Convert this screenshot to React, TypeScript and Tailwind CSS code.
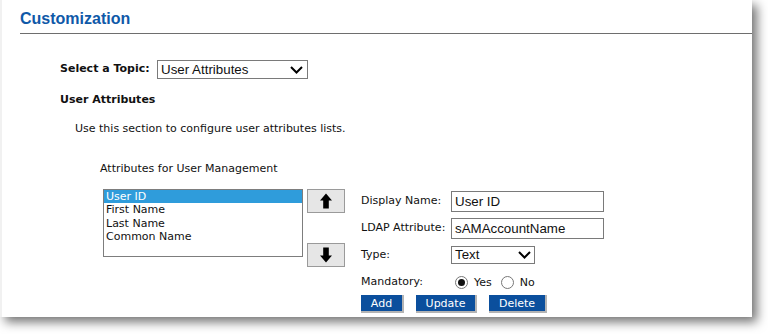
import React from "react";

const UpArrow = () => (
  <svg width="12" height="16" viewBox="0 0 12 16">
    <polygon points="6,0.5 12,7.5 8.8,7.5 8.8,15.5 3.2,15.5 3.2,7.5 0,7.5" fill="#000" />
  </svg>
);
const DownArrow = () => (
  <svg width="12" height="16" viewBox="0 0 12 16">
    <polygon points="6,15.5 12,8.5 8.8,8.5 8.8,0.5 3.2,0.5 3.2,8.5 0,8.5" fill="#000" />
  </svg>
);
const Chevron = () => (
  <svg width="13" height="8" viewBox="0 0 13 8">
    <polyline points="1,1 6.5,6.5 12,1" fill="none" stroke="#000" strokeWidth="2" />
  </svg>
);

export default function App() {
  return (
    <div className="w-[768px] h-[334px] bg-white font-['DejaVu_Sans',Verdana,sans-serif] text-[11px] text-[#111]">
      <div className="w-[752px] h-[317px] bg-white border-l-2 border-[#f1f1f1] shadow-[5px_5px_10px_rgba(0,0,0,0.55)] flex flex-col">
        <div className="ml-[18px] pt-[9px] pb-[4px] border-b border-[#6e6e6e]">
          <h1 className="font-['Liberation_Sans',Arial,sans-serif] font-bold text-[16px] leading-[20px] text-[#0f59a8]">
            Customization
          </h1>
        </div>

        <div className="flex items-center mt-[26px] ml-[58px] h-[19px]">
          <span className="font-bold w-[97px]">Select a Topic:</span>
          <div className="w-[151px] h-[19px] border border-[#7a7a7a] flex items-center justify-between pl-[3px] pr-[4px] font-['Liberation_Sans',Arial,sans-serif] text-[13.33px]">
            <span>User Attributes</span>
            <Chevron />
          </div>
        </div>

        <div className="ml-[58px] mt-[14px] font-bold leading-[14px]">User Attributes</div>
        <div className="ml-[73px] mt-[15px] leading-[14px]">Use this section to configure user attributes lists.</div>
        <div className="ml-[98px] mt-[26px] leading-[14px]">Attributes for User Management</div>

        <div className="flex ml-[101px] mt-[13px]">
          <div className="w-[200px] h-[68px] border border-[#7d7d7d] leading-[13.4px]">
            <div className="bg-[#2f9cdb] text-white pl-[2px]">User ID</div>
            <div className="pl-[2px]">First Name</div>
            <div className="pl-[2px]">Last Name</div>
            <div className="pl-[2px]">Common Name</div>
          </div>

          <div className="flex flex-col gap-[30px] ml-[4px]">
            <div className="w-[38px] h-[24px] bg-[#e6e6e6] border border-[#9a9a9a] flex items-center justify-center">
              <UpArrow />
            </div>
            <div className="w-[38px] h-[24px] bg-[#e6e6e6] border border-[#9a9a9a] flex items-center justify-center">
              <DownArrow />
            </div>
          </div>

          <div className="ml-[16px] mt-[2px] flex flex-col">
            <div className="flex items-center h-[21px]">
              <span className="w-[90px]">Display Name:</span>
              <div className="w-[153px] h-[21px] border border-[#7a7a7a] flex items-center pl-[3px] font-['Liberation_Sans',Arial,sans-serif] text-[13.33px]">
                User ID
              </div>
            </div>
            <div className="flex items-center h-[21px] mt-[6px]">
              <span className="w-[90px]">LDAP Attribute:</span>
              <div className="w-[153px] h-[21px] border border-[#7a7a7a] flex items-center pl-[3px] font-['Liberation_Sans',Arial,sans-serif] text-[13.33px]">
                sAMAccountName
              </div>
            </div>
            <div className="flex items-center h-[18px] mt-[7px]">
              <span className="w-[90px]">Type:</span>
              <div className="w-[84px] h-[18px] border border-[#7a7a7a] flex items-center justify-between pl-[3px] pr-[3px] font-['Liberation_Sans',Arial,sans-serif] text-[13.33px]">
                <span>Text</span>
                <Chevron />
              </div>
            </div>
            <div className="flex items-center h-[16px] mt-[10px]">
              <span className="w-[94px]">Mandatory:</span>
              <span className="w-[13px] h-[13px] rounded-full border border-[#777] bg-white flex items-center justify-center">
                <span className="w-[7px] h-[7px] rounded-full bg-[#111]" />
              </span>
              <span className="ml-[6px] mt-[2px]">Yes</span>
              <span className="ml-[9px] w-[13px] h-[13px] rounded-full border border-[#777] bg-white" />
              <span className="ml-[6px] mt-[2px]">No</span>
            </div>
            <div className="flex mt-[5px] gap-[12px] h-[18px] text-white">
              <div className="w-[43px] h-[18px] bg-[#0b4f9d] border-r-2 border-b-2 border-[#b4b4b4] flex items-center justify-center leading-none">Add</div>
              <div className="w-[61px] h-[18px] bg-[#0b4f9d] border-r-2 border-b-2 border-[#b4b4b4] flex items-center justify-center leading-none">Update</div>
              <div className="w-[58px] h-[18px] bg-[#0b4f9d] border-r-2 border-b-2 border-[#b4b4b4] flex items-center justify-center leading-none">Delete</div>
            </div>
          </div>
        </div>
      </div>
    </div>
  );
}
